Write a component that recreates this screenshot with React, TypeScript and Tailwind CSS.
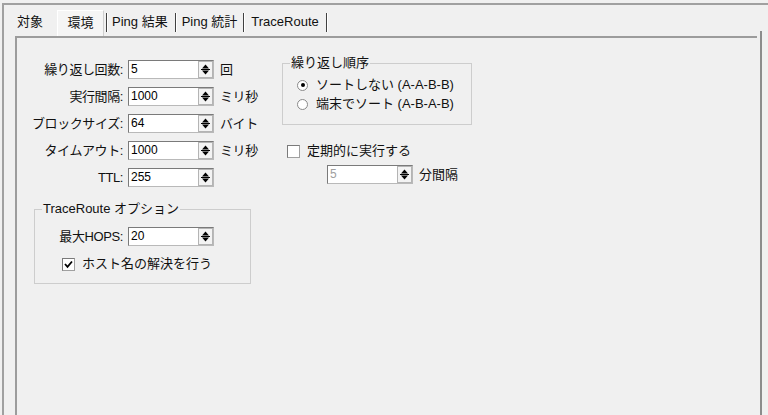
import React from "react";

function Spin() {
  return (
    <svg width="15" height="17" viewBox="0 0 15 17" className="shrink-0">
      <rect x="0.5" y="0.5" width="14" height="16" fill="#f3f3f3" stroke="#b4b4b4" />
      <path d="M4 7.5 L7.5 3.5 L11 7.5 Z" fill="#000" />
      <path d="M3 8.5 H12" stroke="#000" strokeWidth="1" />
      <path d="M4 9.5 L11 9.5 L7.5 13.5 Z" fill="#000" />
    </svg>
  );
}

function NumField({ value, disabled }: { value: string; disabled?: boolean }) {
  return (
    <div className="flex h-[19px] w-[86px] shrink-0 border border-[#b9b9b9] border-t-[#7a7a7a] border-l-[#7a7a7a] bg-white">
      <span
        className={
          disabled
            ? "flex-1 pl-[2px] text-[12px] leading-[17px] text-[#a0a0a0]"
            : "flex-1 pl-[2px] text-[12px] leading-[17px] text-black"
        }
      >
        {value}
      </span>
      <Spin />
    </div>
  );
}

function Row({ label, value, unit, labelW }: { label: string; value: string; unit?: string; labelW: "outer" | "inner" }) {
  return (
    <div className="flex h-[19px] items-center whitespace-nowrap">
      <span
        className={
          labelW === "outer"
            ? "flex w-[89px] shrink-0 justify-end whitespace-nowrap tracking-[-0.4px]"
            : "flex w-[88px] shrink-0 justify-end whitespace-nowrap tracking-[-0.4px]"
        }
      >
        {label}
      </span>
      <div className="ml-[5px] shrink-0">
        <NumField value={value} />
      </div>
      {unit && <span className="ml-[6px] shrink-0 whitespace-nowrap tracking-[-0.4px]">{unit}</span>}
    </div>
  );
}

function Check({ checked }: { checked?: boolean }) {
  return (
    <span className="flex h-[13px] w-[13px] shrink-0 items-center justify-center border border-[#a0a0a0] border-t-[#7a7a7a] border-l-[#7a7a7a] bg-white">
      {checked && (
        <svg width="9" height="9" viewBox="0 0 9 9">
          <path d="M1 4 L3.5 6.8 L8 1.5" stroke="#000" strokeWidth="1.8" fill="none" />
        </svg>
      )}
    </span>
  );
}

function Radio({ checked }: { checked?: boolean }) {
  return (
    <span className="flex h-[11px] w-[11px] shrink-0 items-center justify-center rounded-full border border-[#8a8a8a] bg-white">
      {checked && <span className="h-[4px] w-[4px] rounded-full bg-black" />}
    </span>
  );
}

function Sep() {
  return <span className="mt-[3px] h-[19px] w-[2px] shrink-0 border-l border-l-[#404040] border-r border-r-white" />;
}

export default function App() {
  return (
    <div className="h-[415px] w-[768px] overflow-hidden bg-[#f0f0f0] pl-[2px] pt-[3px] font-['Liberation_Sans','Noto_Sans_CJK_JP',sans-serif] text-[13px] leading-[16px] text-[#111]">
      <div className="flex h-full border-l-2 border-t-2 border-[#a0a0a0]">
        <div className="flex w-[753px] flex-col">
          {/* tabs */}
          <div className="flex h-[31px] shrink-0 items-start whitespace-nowrap pt-[5px]">
            <div className="ml-[13px] flex h-[26px] items-center pb-[2px]">対象</div>
            <div className="ml-[14px] flex h-[26px] w-[47px] items-center justify-center border-l border-t border-r border-white border-r-[#cfcfcf] bg-[#f5f5f5] pb-[2px]">
              環境
            </div>
            <span className="ml-[2px] flex">
              <Sep />
            </span>
            <div className="ml-[4px] flex h-[26px] items-center pb-[2px]">Ping 結果</div>
            <span className="ml-[7px] flex">
              <Sep />
            </span>
            <div className="ml-[5px] flex h-[26px] items-center pb-[2px]">Ping 統計</div>
            <span className="ml-[6px] flex">
              <Sep />
            </span>
            <div className="ml-[6px] flex h-[26px] items-center pb-[2px]">TraceRoute</div>
            <span className="ml-[7px] flex">
              <Sep />
            </span>
          </div>

          {/* panel */}
          <div className="ml-[11px] flex flex-1 border-l-2 border-t-2 border-[#9c9c9c] pl-[17px] pt-[17px]">
            {/* left column */}
            <div className="flex w-[217px] shrink-0 flex-col pt-[5px]">
              <div className="flex flex-col gap-[8px]">
                <Row labelW="outer" label="繰り返し回数:" value="5" unit="回" />
                <Row labelW="outer" label="実行間隔:" value="1000" unit="ミリ秒" />
                <Row labelW="outer" label="ブロックサイズ:" value="64" unit="バイト" />
                <Row labelW="outer" label="タイムアウト:" value="1000" unit="ミリ秒" />
                <Row labelW="outer" label="TTL:" value="255" />
              </div>
              <fieldset className="mt-[14px] border border-[#cdcdcd] pb-[11px] pt-[10px]">
                <legend className="ml-[7px] whitespace-nowrap px-[1px] leading-[16px]">TraceRoute オプション</legend>
                <Row labelW="inner" label="最大HOPS:" value="20" />
                <div className="mt-[10px] flex h-[16px] items-center whitespace-nowrap pl-[27px]">
                  <Check checked />
                  <span className="ml-[7px]">ホスト名の解決を行う</span>
                </div>
              </fieldset>
            </div>

            {/* right column */}
            <div className="ml-[31px] flex shrink-0 flex-col whitespace-nowrap">
              <fieldset className="w-[190px] border border-[#cdcdcd] pb-[12px] pt-[6px]">
                <legend className="ml-[7px] px-[1px] leading-[16px]">繰り返し順序</legend>
                <div className="flex h-[16px] items-center pl-[14px]">
                  <Radio checked />
                  <span className="ml-[8px]">ソートしない (A-A-B-B)</span>
                </div>
                <div className="mt-[3px] flex h-[16px] items-center pl-[14px]">
                  <Radio />
                  <span className="ml-[8px]">端末でソート (A-B-A-B)</span>
                </div>
              </fieldset>
              <div className="mt-[18px] flex h-[16px] items-center pl-[5px]">
                <Check />
                <span className="ml-[7px]">定期的に実行する</span>
              </div>
              <div className="mt-[6px] flex h-[19px] items-center pl-[45px]">
                <NumField value="5" disabled />
                <span className="ml-[6px]">分間隔</span>
              </div>
            </div>
          </div>
        </div>
        <div className="ml-[3px] mt-[26px] w-[2px] shrink-0 bg-[#8c8c8c]" />
      </div>
    </div>
  );
}
